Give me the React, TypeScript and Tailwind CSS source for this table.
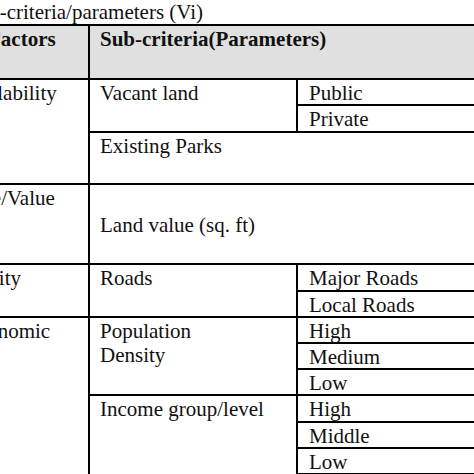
import React from 'react';

interface CellProps {
  children?: React.ReactNode;
  className?: string;
}

// factor column cell (left), sits at the far left and is partly cut off
function FactorCell({ children, className = 'pl-[8px]' }: Readonly<CellProps>): React.ReactElement {
  return (
    <div className={`w-[140px] shrink-0 border-r-2 border-black pt-[1px] whitespace-nowrap ${className}`}>
      {children}
    </div>
  );
}

function SubCell({ children, className = '' }: Readonly<CellProps>): React.ReactElement {
  return (
    <div className={`w-[208px] shrink-0 border-r-2 border-black pl-[10px] pt-[1px] ${className}`}>
      {children}
    </div>
  );
}

function ParamCell({ children, className = '' }: Readonly<CellProps>): React.ReactElement {
  return <div className={`pl-[11px] pt-[1px] whitespace-nowrap ${className}`}>{children}</div>;
}

export default function App(): React.ReactElement {
  return (
    <div className="w-[474px] h-[474px] overflow-hidden bg-white text-[21px] leading-[24px] text-[#111] font-['Liberation_Serif',serif]">
      <p className="-ml-[33px] h-[24px] whitespace-nowrap">Sub-criteria/parameters (Vi)</p>

      <div className="-ml-[52px] w-[620px] border-t-2 border-l-2 border-black">
        {/* header */}
        <div className="flex h-[54px] bg-[#e0e0e0] border-b-2 border-black font-bold">
          <div className="w-[140px] shrink-0 border-r-2 border-black pl-[38px] pt-[1px]">Factors</div>
          <div className="flex-1 pl-[10px] pt-[1px]">Sub-criteria(Parameters)</div>
        </div>

        {/* availability */}
        <div className="flex h-[105px] border-b-2 border-black">
          <FactorCell>Availability</FactorCell>
          <div className="flex-1 flex flex-col">
            <div className="flex h-[53px] border-b-2 border-black">
              <SubCell>Vacant land</SubCell>
              <div className="flex-1 flex flex-col">
                <ParamCell className="h-[26px] border-b-2 border-black">Public</ParamCell>
                <ParamCell className="flex-1">Private</ParamCell>
              </div>
            </div>
            <div className="flex-1 pl-[10px] pt-[1px]">Existing Parks</div>
          </div>
        </div>

        {/* price / value */}
        <div className="flex h-[80px] border-b-2 border-black">
          <FactorCell>Price/Value</FactorCell>
          <div className="flex-1 flex items-center pl-[10px] pt-[2px]">Land value (sq. ft)</div>
        </div>

        {/* roads */}
        <div className="flex h-[53px] border-b-2 border-black">
          <FactorCell>Quality</FactorCell>
          <SubCell>Roads</SubCell>
          <div className="flex-1 flex flex-col">
            <ParamCell className="h-[27px] border-b-2 border-black">Major Roads</ParamCell>
            <ParamCell className="flex-1">Local Roads</ParamCell>
          </div>
        </div>

        {/* economic */}
        <div className="flex h-[160px]">
          <FactorCell className="pl-[15px]">Economic</FactorCell>
          <div className="flex-1 flex flex-col">
            <div className="flex h-[78px] border-b-2 border-black">
              <SubCell>
                Population
                <br />
                Density
              </SubCell>
              <div className="flex-1 flex flex-col">
                <ParamCell className="h-[26px] border-b-2 border-black">High</ParamCell>
                <ParamCell className="h-[26px] border-b-2 border-black">Medium</ParamCell>
                <ParamCell className="flex-1">Low</ParamCell>
              </div>
            </div>
            <div className="flex flex-1">
              <SubCell className="whitespace-nowrap">Income group/level</SubCell>
              <div className="flex-1 flex flex-col">
                <ParamCell className="h-[27px] border-b-2 border-black">High</ParamCell>
                <ParamCell className="h-[26px] border-b-2 border-black">Middle</ParamCell>
                <ParamCell className="h-[26px] border-b-2 border-black">Low</ParamCell>
              </div>
            </div>
          </div>
        </div>
      </div>
    </div>
  );
}
